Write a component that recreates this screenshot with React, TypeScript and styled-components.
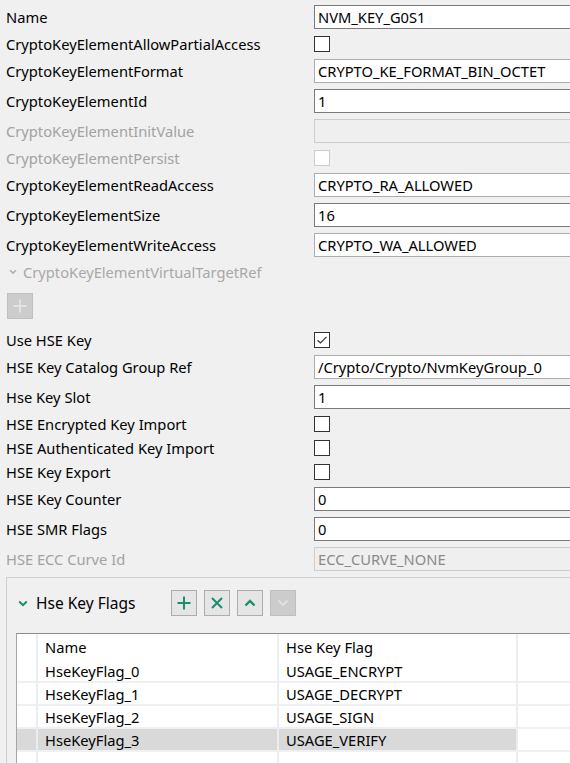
import React from 'react';
import styled, { createGlobalStyle } from 'styled-components';

const GlobalStyle = createGlobalStyle`
    html, body {
        margin: 0;
        padding: 0;
        background: #f0f0f0;
        overflow: hidden;
    }
    body {
        font-family: 'Noto Sans', 'Open Sans', sans-serif;
        font-size: 14.7px;
        color: #000;
    }
`;

const teal = '#1e8a6e';

const Page = styled.div`
    width: 640px;
    padding-top: 2px;
`;

const FieldRow = styled.div<{ $tall?: boolean }>`
    display: grid;
    grid-template-columns: 308px 1fr;
    align-items: center;
    height: ${(p) => (p.$tall ? 30 : 24)}px;
    padding-left: 6px;
`;

const Label = styled.span<{ $disabled?: boolean }>`
    color: ${(p) => (p.$disabled ? '#a2a2a2' : '#000')};
    white-space: nowrap;
`;

const TextInput = styled.div<{ $combo?: boolean; $disabled?: boolean }>`
    box-sizing: border-box;
    height: 24px;
    display: flex;
    align-items: center;
    padding-left: 3px;
    background: ${(p) => (p.$disabled ? '#efefef' : '#fff')};
    border: 1px solid ${(p) => (p.$disabled ? '#cccccc' : p.$combo ? '#adadad' : '#7a7a7a')};
    color: ${(p) => (p.$disabled ? '#8a8a8a' : '#000')};
    white-space: nowrap;
`;

const CheckBox = styled.div<{ $disabled?: boolean }>`
    box-sizing: border-box;
    width: 16px;
    height: 16px;
    background: #fff;
    border: 1px solid ${(p) => (p.$disabled ? '#cccccc' : '#333')};
    display: flex;
    align-items: center;
    justify-content: center;
`;

const RefRow = styled.div`
    display: flex;
    align-items: center;
    gap: 6px;
    height: 24px;
    padding-left: 9px;
    color: #a8a8a8;
`;

const AddRow = styled.div`
    padding: 9px 0 9px 7px;
`;

const ToolButton = styled.div<{ $disabled?: boolean }>`
    box-sizing: border-box;
    width: 26px;
    height: 26px;
    display: flex;
    align-items: center;
    justify-content: center;
    background: ${(p) => (p.$disabled ? '#cccccc' : '#e5e5e5')};
    border: 1px solid ${(p) => (p.$disabled ? '#bfbfbf' : '#adadad')};
`;

const Panel = styled.div`
    margin: 3px 0 0 6px;
    border-top: 1px solid #cfcfcf;
    border-left: 1px solid #cfcfcf;
    padding: 12px 0 0 9px;
`;

const PanelHeader = styled.div`
    display: flex;
    align-items: center;
    height: 26px;
    padding-left: 2px;
`;

const PanelTitle = styled.span`
    font-size: 15.5px;
    margin-left: 8px;
    margin-right: 36px;
`;

const Buttons = styled.div`
    display: flex;
    gap: 7px;
`;

const Table = styled.div`
    margin-top: 17px;
    background: #fff;
    border-top: 1px solid #8c8c8c;
    border-left: 1px solid #a6a6a6;
    display: grid;
    grid-template-columns: 21px 241px 239px 1fr;
    grid-template-rows: 26px repeat(4, 23px) 1fr;
    height: 150px;
`;

const Cell = styled.div<{ $header?: boolean; $selected?: boolean; $last?: boolean }>`
    box-sizing: border-box;
    display: flex;
    align-items: center;
    padding-left: 7px;
    white-space: nowrap;
    background: ${(p) => (p.$selected ? '#d9d9d9' : '#fff')};
    border-right: ${(p) => (p.$last ? 'none' : '2px solid #eaedf1')};
    border-bottom: ${(p) => (p.$header ? 'none' : '2px solid #eef0f3')};
`;

const Filler = styled.div<{ $last?: boolean }>`
    border-right: ${(p) => (p.$last ? 'none' : '2px solid #eaedf1')};
`;

const Check = () => (
    <svg width="12" height="10" viewBox="0 0 12 10">
        <path d="M1.5 5.2 L4.5 8 L10.5 1.8" fill="none" stroke="#333" strokeWidth="1.2" />
    </svg>
);

const Chevron = ({ color, size = 10 }: { color: string; size?: number }) => (
    <svg width={size} height={size * 0.7} viewBox="0 0 10 7">
        <path d="M1.2 1.5 L5 5.2 L8.8 1.5" fill="none" stroke={color} strokeWidth="2" />
    </svg>
);

const PlusIcon = ({ color }: { color: string }) => (
    <svg width="16" height="16" viewBox="0 0 16 16">
        <path d="M8 1.5 V14.5 M1.5 8 H14.5" stroke={color} strokeWidth="2" />
    </svg>
);

const CrossIcon = () => (
    <svg width="14" height="14" viewBox="0 0 14 14">
        <path d="M2 2 L12 12 M12 2 L2 12" stroke={teal} strokeWidth="2" />
    </svg>
);

const UpIcon = ({ color }: { color: string }) => (
    <svg width="12" height="8" viewBox="0 0 12 8">
        <path d="M1.5 6.5 L6 2 L10.5 6.5" fill="none" stroke={color} strokeWidth="2.4" />
    </svg>
);

const DownIcon = ({ color }: { color: string }) => (
    <svg width="12" height="8" viewBox="0 0 12 8">
        <path d="M1.5 1.5 L6 6 L10.5 1.5" fill="none" stroke={color} strokeWidth="2" />
    </svg>
);

type Field =
    | { kind: 'text'; label: string; value: string; combo?: boolean; disabled?: boolean }
    | { kind: 'check'; label: string; checked?: boolean; disabled?: boolean };

const topFields: Field[] = [
    { kind: 'text', label: 'Name', value: 'NVM_KEY_G0S1' },
    { kind: 'check', label: 'CryptoKeyElementAllowPartialAccess' },
    { kind: 'text', label: 'CryptoKeyElementFormat', value: 'CRYPTO_KE_FORMAT_BIN_OCTET', combo: true },
    { kind: 'text', label: 'CryptoKeyElementId', value: '1' },
    { kind: 'text', label: 'CryptoKeyElementInitValue', value: '', disabled: true },
    { kind: 'check', label: 'CryptoKeyElementPersist', disabled: true },
    { kind: 'text', label: 'CryptoKeyElementReadAccess', value: 'CRYPTO_RA_ALLOWED', combo: true },
    { kind: 'text', label: 'CryptoKeyElementSize', value: '16' },
    { kind: 'text', label: 'CryptoKeyElementWriteAccess', value: 'CRYPTO_WA_ALLOWED', combo: true },
];

const hseFields: Field[] = [
    { kind: 'check', label: 'Use HSE Key', checked: true },
    { kind: 'text', label: 'HSE Key Catalog Group Ref', value: '/Crypto/Crypto/NvmKeyGroup_0', combo: true },
    { kind: 'text', label: 'Hse Key Slot', value: '1' },
    { kind: 'check', label: 'HSE Encrypted Key Import' },
    { kind: 'check', label: 'HSE Authenticated Key Import' },
    { kind: 'check', label: 'HSE Key Export' },
    { kind: 'text', label: 'HSE Key Counter', value: '0' },
    { kind: 'text', label: 'HSE SMR Flags', value: '0' },
    { kind: 'text', label: 'HSE ECC Curve Id', value: 'ECC_CURVE_NONE', combo: true, disabled: true },
];

const flags = [
    { name: 'HseKeyFlag_0', flag: 'USAGE_ENCRYPT' },
    { name: 'HseKeyFlag_1', flag: 'USAGE_DECRYPT' },
    { name: 'HseKeyFlag_2', flag: 'USAGE_SIGN' },
    { name: 'HseKeyFlag_3', flag: 'USAGE_VERIFY' },
];

const FieldView: React.FC<{ field: Field }> = ({ field }) =>
    field.kind === 'text' ? (
        <FieldRow $tall>
            <Label $disabled={field.disabled}>{field.label}</Label>
            <TextInput $combo={field.combo} $disabled={field.disabled}>
                {field.value}
            </TextInput>
        </FieldRow>
    ) : (
        <FieldRow>
            <Label $disabled={field.disabled}>{field.label}</Label>
            <CheckBox $disabled={field.disabled}>{field.checked && <Check />}</CheckBox>
        </FieldRow>
    );

export default function App() {
    return (
        <Page>
            <GlobalStyle />
            {topFields.map((f) => (
                <FieldView key={f.label} field={f} />
            ))}
            <RefRow>
                <Chevron color="#b0b0b0" size={8} />
                CryptoKeyElementVirtualTargetRef
            </RefRow>
            <AddRow>
                <ToolButton $disabled>
                    <PlusIcon color="#e2e2e2" />
                </ToolButton>
            </AddRow>
            {hseFields.map((f) => (
                <FieldView key={f.label} field={f} />
            ))}
            <Panel>
                <PanelHeader>
                    <Chevron color={teal} size={10} />
                    <PanelTitle>Hse Key Flags</PanelTitle>
                    <Buttons>
                        <ToolButton>
                            <PlusIcon color={teal} />
                        </ToolButton>
                        <ToolButton>
                            <CrossIcon />
                        </ToolButton>
                        <ToolButton>
                            <UpIcon color={teal} />
                        </ToolButton>
                        <ToolButton $disabled>
                            <DownIcon color="#e0e0e0" />
                        </ToolButton>
                    </Buttons>
                </PanelHeader>
                <Table>
                    <Cell $header />
                    <Cell $header>Name</Cell>
                    <Cell $header>Hse Key Flag</Cell>
                    <Cell $header $last />
                    {flags.map((r, i) => {
                        const selected = i === flags.length - 1;
                        return (
                            <React.Fragment key={r.name}>
                                <Cell $selected={selected} />
                                <Cell $selected={selected}>{r.name}</Cell>
                                <Cell $selected={selected}>{r.flag}</Cell>
                                <Cell $last />
                            </React.Fragment>
                        );
                    })}
                    <Filler />
                    <Filler />
                    <Filler />
                    <Filler $last />
                </Table>
            </Panel>
        </Page>
    );
}
